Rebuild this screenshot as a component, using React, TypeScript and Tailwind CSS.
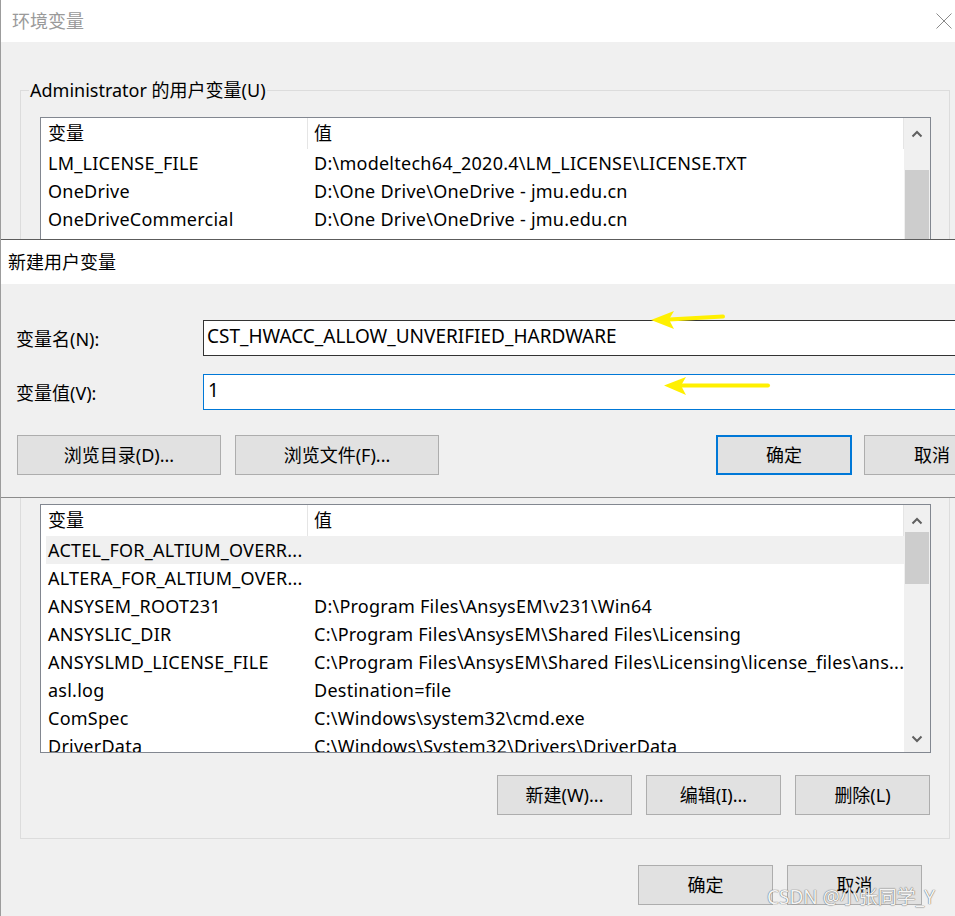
import type { ReactNode } from 'react'

const FONT = "font-['Noto_Sans','Noto_Sans_CJK_SC',sans-serif]"

type Row = { name: string; value: string }

const USER_VARS: Row[] = [
  { name: 'LM_LICENSE_FILE', value: 'D:\\modeltech64_2020.4\\LM_LICENSE\\LICENSE.TXT' },
  { name: 'OneDrive', value: 'D:\\One Drive\\OneDrive - jmu.edu.cn' },
  { name: 'OneDriveCommercial', value: 'D:\\One Drive\\OneDrive - jmu.edu.cn' },
]

const SYSTEM_VARS: Row[] = [
  { name: 'ACTEL_FOR_ALTIUM_OVERR...', value: '' },
  { name: 'ALTERA_FOR_ALTIUM_OVER...', value: '' },
  { name: 'ANSYSEM_ROOT231', value: 'D:\\Program Files\\AnsysEM\\v231\\Win64' },
  { name: 'ANSYSLIC_DIR', value: 'C:\\Program Files\\AnsysEM\\Shared Files\\Licensing' },
  { name: 'ANSYSLMD_LICENSE_FILE', value: 'C:\\Program Files\\AnsysEM\\Shared Files\\Licensing\\license_files\\ans...' },
  { name: 'asl.log', value: 'Destination=file' },
  { name: 'ComSpec', value: 'C:\\Windows\\system32\\cmd.exe' },
  { name: 'DriverData', value: 'C:\\Windows\\System32\\Drivers\\DriverData' },
]

function Chevron({ down }: { down?: boolean }) {
  return (
    <svg width="12" height="8" viewBox="0 0 12 8" fill="none">
      <path
        d={down ? 'M1.5 1.5 L6 6 L10.5 1.5' : 'M1.5 6.5 L6 2 L10.5 6.5'}
        stroke="#606060"
        strokeWidth="2"
      />
    </svg>
  )
}

function Btn({ children, primary, className = '' }: { children: ReactNode; primary?: boolean; className?: string }) {
  return (
    <div
      className={
        'flex h-[40px] shrink-0 items-center justify-center bg-[#e1e1e1] text-[18px] text-black ' +
        (primary ? 'border-2 border-[#0078d7] ' : 'border border-[#adadad] ') +
        className
      }
    >
      {children}
    </div>
  )
}

function ListView({
  rows,
  selected,
  className,
  gapBeforeThumb,
  thumbHeight,
}: {
  rows: Row[]
  selected?: number
  className: string
  gapBeforeThumb: number
  thumbHeight: number
}) {
  return (
    <div className={'flex overflow-hidden border border-[#828790] bg-white ' + className}>
      <div className="min-w-0 flex-1">
        <div className="flex h-[31px] text-[18px]">
          <div className="flex w-[267px] items-center border-r border-[#e5e5e5] pl-[7px]">变量</div>
          <div className="flex flex-1 items-center border-r border-[#e5e5e5] pl-[6px]">值</div>
        </div>
        {rows.map((r, i) => (
          <div
            key={r.name}
            className={
              'ml-[5px] flex h-[28px] items-center whitespace-nowrap text-[18px] tracking-[0.25px] ' +
              (i === selected ? 'bg-[#f0f0f0]' : '')
            }
          >
            <div className="w-[268px] shrink-0 overflow-hidden pl-[2px]">{r.name}</div>
            <div className="min-w-0 flex-1 overflow-hidden">{r.value}</div>
          </div>
        ))}
      </div>
      {/* scrollbar */}
      <div className="flex w-[26px] shrink-0 flex-col bg-[#f0f0f0]">
        <div className="flex h-[27px] shrink-0 items-center justify-center pt-[5px]">
          <Chevron />
        </div>
        <div className="flex-1">
          <div style={{ height: gapBeforeThumb }} />
          <div className="mx-px bg-[#cdcdcd]" style={{ height: thumbHeight }} />
        </div>
        <div className="flex h-[27px] shrink-0 items-center justify-center">
          <Chevron down />
        </div>
      </div>
    </div>
  )
}

export default function App() {
  return (
    <div className={'relative h-[916px] w-[955px] overflow-hidden border-l border-[#9c9c9c] bg-[#f0f0f0] text-black ' + FONT}>
      {/* Background window: 环境变量 */}
      <div className="flex h-[42px] items-center justify-between bg-white pl-[11px] pr-[3px]">
        <span className="text-[18px] text-[#9a9a9a]">环境变量</span>
        <svg width="16" height="16" viewBox="0 0 16 16">
          <path d="M0.5 0.5 L15.5 15.5 M15.5 0.5 L0.5 15.5" stroke="#8a8a8a" strokeWidth="1" />
        </svg>
      </div>

      <div className="relative ml-[19px] mr-[5px] mt-[48px] h-[749px] border border-[#dcdcdc]">
        <span className="absolute -top-[13px] left-[8px] bg-[#f0f0f0] px-px text-[18px] leading-[24px]">
          Administrator 的用户变量(U)
        </span>

        <ListView
          rows={USER_VARS}
          className="ml-[19px] mr-[18px] mt-[26px] h-[340px]"
          gapBeforeThumb={25}
          thumbHeight={140}
        />

        <ListView
          rows={SYSTEM_VARS}
          selected={0}
          className="ml-[19px] mr-[18px] mt-[47px] h-[249px]"
          gapBeforeThumb={0}
          thumbHeight={52}
        />

        <div className="mr-[19px] mt-[22px] flex justify-end gap-[14px]">
          <Btn className="w-[135px]">新建(W)...</Btn>
          <Btn className="w-[135px]">编辑(I)...</Btn>
          <Btn className="w-[135px]">删除(L)</Btn>
        </div>
      </div>

      <div className="mt-[26px] flex justify-end gap-[14px] pr-[33px]">
        <Btn className="w-[135px]">确定</Btn>
        <Btn className="w-[135px]">取消</Btn>
      </div>

      {/* Overlaid dialog: 新建用户变量 */}
      <div className="absolute -left-px top-[239px] flex h-[259px] w-[956px] flex-col overflow-hidden border-y border-t-[#5c5c5c] border-b-[#8c8c8c] bg-[#f0f0f0]">
        <div className="flex h-[44px] shrink-0 items-center bg-white pl-[8px] text-[18px]">新建用户变量</div>
        <div className="flex-1 pt-[36px]">
          <div className="flex h-[36px] items-center">
            <div className="w-[203px] shrink-0 pl-[16px] pt-[2px] text-[18px]">变量名(N):</div>
            <div className="flex h-[36px] w-[800px] shrink-0 items-center border border-[#333333] bg-white pb-[4px] pl-[3px] text-[19px]">
              CST_HWACC_ALLOW_UNVERIFIED_HARDWARE
            </div>
          </div>
          <div className="mt-[18px] flex h-[36px] items-center">
            <div className="w-[203px] shrink-0 pl-[16px] pt-[2px] text-[18px]">变量值(V):</div>
            <div className="flex h-[36px] w-[800px] shrink-0 items-center border border-[#0078d7] bg-white pb-[4px] pl-[4px] text-[19px]">
              1
            </div>
          </div>
          <div className="mt-[25px] flex pl-[17px]">
            <Btn className="w-[204px]">浏览目录(D)...</Btn>
            <Btn className="ml-[14px] w-[204px]">浏览文件(F)...</Btn>
            <Btn primary className="ml-[277px] w-[136px]">确定</Btn>
            <Btn className="ml-[12px] w-[136px]">取消</Btn>
          </div>
        </div>
      </div>

      {/* Yellow annotation arrows */}
      <svg className="pointer-events-none absolute left-0 top-0" width="955" height="916" viewBox="0 0 955 916">
        <path d="M722 316.5 L668 319.5" stroke="#fff000" strokeWidth="4" strokeLinecap="round" />
        <path d="M650 320 L673 311 L668 319.5 L673 329 Z" fill="#fff000" />
        <path d="M767 385.5 L680 385.5" stroke="#fff000" strokeWidth="4" strokeLinecap="round" />
        <path d="M663 385.5 L685 377 L680 385.5 L685 395 Z" fill="#fff000" />
      </svg>

      {/* Watermark */}
      <span className="pointer-events-none absolute left-[766px] top-[884px] text-[19px] leading-[26px] text-[#f4f4f4] [text-shadow:0_0_1px_#6a6a6a,0_0_1px_#6a6a6a]">
        CSDN @小张同学_Y
      </span>
    </div>
  )
}
